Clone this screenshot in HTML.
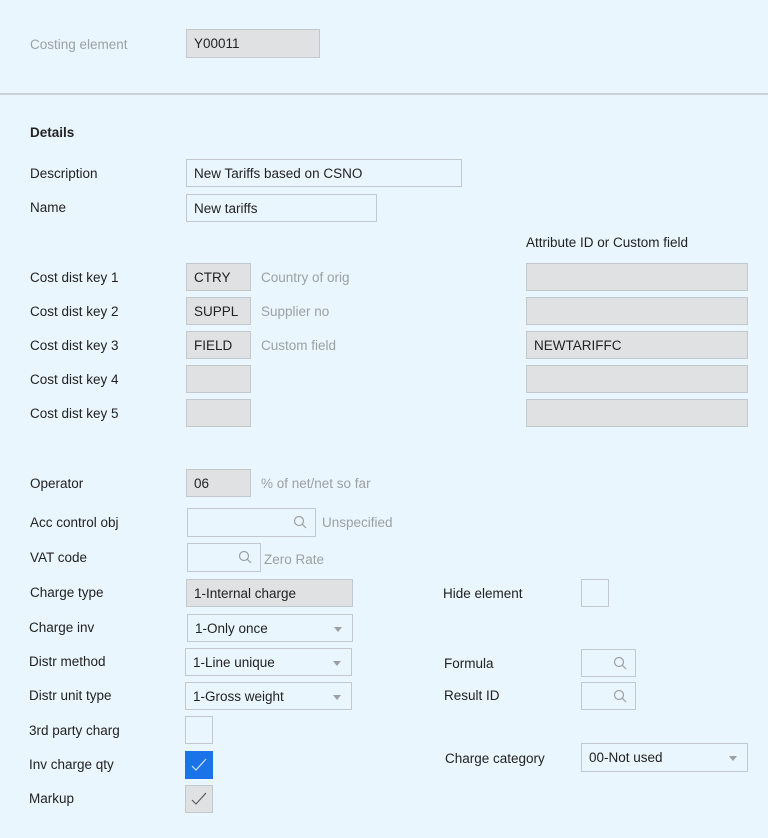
<!DOCTYPE html>
<html><head><meta charset="utf-8"><style>
body{margin:0;width:768px;height:838px;background:#eaf6fd;font-family:"Liberation Sans",sans-serif;font-size:13.5px;color:#222;position:relative;overflow:hidden}
.l{position:absolute;line-height:16px;transform:translateY(-7px);white-space:nowrap}
.g{color:#9aa0a6}
.b{position:absolute;box-sizing:border-box;border:1px solid #c3c8cc;background:#eaf6fd;padding-left:7px;display:flex;align-items:center;white-space:nowrap}
.gr{background:#e0e1e2}
.dd::after{content:"";position:absolute;right:10px;top:12px;border-left:4px solid transparent;border-right:4px solid transparent;border-top:5px solid #9aa0a6}
.s svg{position:absolute;right:8px;top:6px}
</style></head><body>
<div class="l g" style="left:30px;top:44px">Costing element</div>
<div class="b gr" style="left:186px;top:29px;width:134px;height:29px">Y00011</div>
<div style="position:absolute;left:0;top:93px;width:768px;height:2px;background:#c9cfd4"></div>
<div class="l" style="left:30px;top:132px;font-weight:bold">Details</div>
<div class="l" style="left:30px;top:173px">Description</div>
<div class="b" style="left:186px;top:159px;width:276px;height:28px">New Tariffs based on CSNO</div>
<div class="l" style="left:30px;top:207px">Name</div>
<div class="b" style="left:186px;top:194px;width:191px;height:28px">New tariffs</div>
<div class="l" style="left:526px;top:242px">Attribute ID or Custom field</div>

<div class="l" style="left:30px;top:277px">Cost dist key 1</div>
<div class="b gr" style="left:186px;top:263px;width:65px;height:28px">CTRY</div>
<div class="l g" style="left:261px;top:277px">Country of orig</div>
<div class="b gr" style="left:526px;top:263px;width:222px;height:28px"></div>
<div class="l" style="left:30px;top:311px">Cost dist key 2</div>
<div class="b gr" style="left:186px;top:297px;width:65px;height:28px">SUPPL</div>
<div class="l g" style="left:261px;top:311px">Supplier no</div>
<div class="b gr" style="left:526px;top:297px;width:222px;height:28px"></div>
<div class="l" style="left:30px;top:345px">Cost dist key 3</div>
<div class="b gr" style="left:186px;top:331px;width:65px;height:28px">FIELD</div>
<div class="l g" style="left:261px;top:345px">Custom field</div>
<div class="b gr" style="left:526px;top:331px;width:222px;height:28px">NEWTARIFFC</div>
<div class="l" style="left:30px;top:379px">Cost dist key 4</div>
<div class="b gr" style="left:186px;top:365px;width:65px;height:28px"></div>
<div class="b gr" style="left:526px;top:365px;width:222px;height:28px"></div>
<div class="l" style="left:30px;top:413px">Cost dist key 5</div>
<div class="b gr" style="left:186px;top:399px;width:65px;height:28px"></div>
<div class="b gr" style="left:526px;top:399px;width:222px;height:28px"></div>

<div class="l" style="left:30px;top:483px">Operator</div>
<div class="b gr" style="left:186px;top:469px;width:65px;height:28px">06</div>
<div class="l g" style="left:261px;top:483px">% of net/net so far</div>

<div class="l" style="left:30px;top:522px">Acc control obj</div>
<div class="b s" style="left:187px;top:508px;width:129px;height:29px"><svg width="14" height="14" viewBox="0 0 14 14" fill="none" stroke="#9aa0a6" stroke-width="1.2"><circle cx="6" cy="6" r="4.5"/><path d="M9.3 9.3L13 13"/></svg></div>
<div class="l g" style="left:322px;top:522px">Unspecified</div>
<div class="l" style="left:30px;top:557px">VAT code</div>
<div class="b s" style="left:187px;top:543px;width:74px;height:29px"><svg width="14" height="14" viewBox="0 0 14 14" fill="none" stroke="#9aa0a6" stroke-width="1.2"><circle cx="6" cy="6" r="4.5"/><path d="M9.3 9.3L13 13"/></svg></div>
<div class="l g" style="left:264px;top:559px">Zero Rate</div>
<div class="l" style="left:30px;top:592px">Charge type</div>
<div class="b gr" style="left:186px;top:579px;width:167px;height:28px">1-Internal charge</div>
<div class="l" style="left:29px;top:627px">Charge inv</div>
<div class="b dd" style="left:187px;top:614px;width:166px;height:28px">1-Only once</div>
<div class="l" style="left:29px;top:661px">Distr method</div>
<div class="b dd" style="left:185px;top:648px;width:167px;height:28px">1-Line unique</div>
<div class="l" style="left:29px;top:695px">Distr unit type</div>
<div class="b dd" style="left:185px;top:682px;width:167px;height:28px">1-Gross weight</div>
<div class="l" style="left:29px;top:730px">3rd party charg</div>
<div class="b" style="left:185px;top:716px;width:28px;height:28px"></div>
<div class="l" style="left:29px;top:764px">Inv charge qty</div>
<div class="b" style="left:185px;top:751px;width:28px;height:28px;background:#1a73e8;border-color:#1a73e8;padding:0"><svg width="26" height="26" viewBox="0 0 26 26" fill="none" stroke="#cfe3ff" stroke-width="1.2" style="position:absolute;left:0;top:0"><path d="M6 14l4 4 10-11"/></svg></div>
<div class="l" style="left:29px;top:798px">Markup</div>
<div class="b gr" style="left:185px;top:785px;width:28px;height:28px;padding:0"><svg width="26" height="26" viewBox="0 0 26 26" fill="none" stroke="#555" stroke-width="1.1" style="position:absolute;left:0;top:0"><path d="M6 14l4 4 10-11"/></svg></div>

<div class="l" style="left:443px;top:593px">Hide element</div>
<div class="b" style="left:581px;top:579px;width:28px;height:28px"></div>
<div class="l" style="left:444px;top:663px">Formula</div>
<div class="b s" style="left:581px;top:649px;width:55px;height:28px"><svg width="14" height="14" viewBox="0 0 14 14" fill="none" stroke="#9aa0a6" stroke-width="1.2"><circle cx="6" cy="6" r="4.5"/><path d="M9.3 9.3L13 13"/></svg></div>
<div class="l" style="left:444px;top:695px">Result ID</div>
<div class="b s" style="left:581px;top:682px;width:55px;height:28px"><svg width="14" height="14" viewBox="0 0 14 14" fill="none" stroke="#9aa0a6" stroke-width="1.2"><circle cx="6" cy="6" r="4.5"/><path d="M9.3 9.3L13 13"/></svg></div>
<div class="l" style="left:445px;top:758px">Charge category</div>
<div class="b dd" style="left:581px;top:743px;width:167px;height:29px">00-Not used</div>
</body></html>
